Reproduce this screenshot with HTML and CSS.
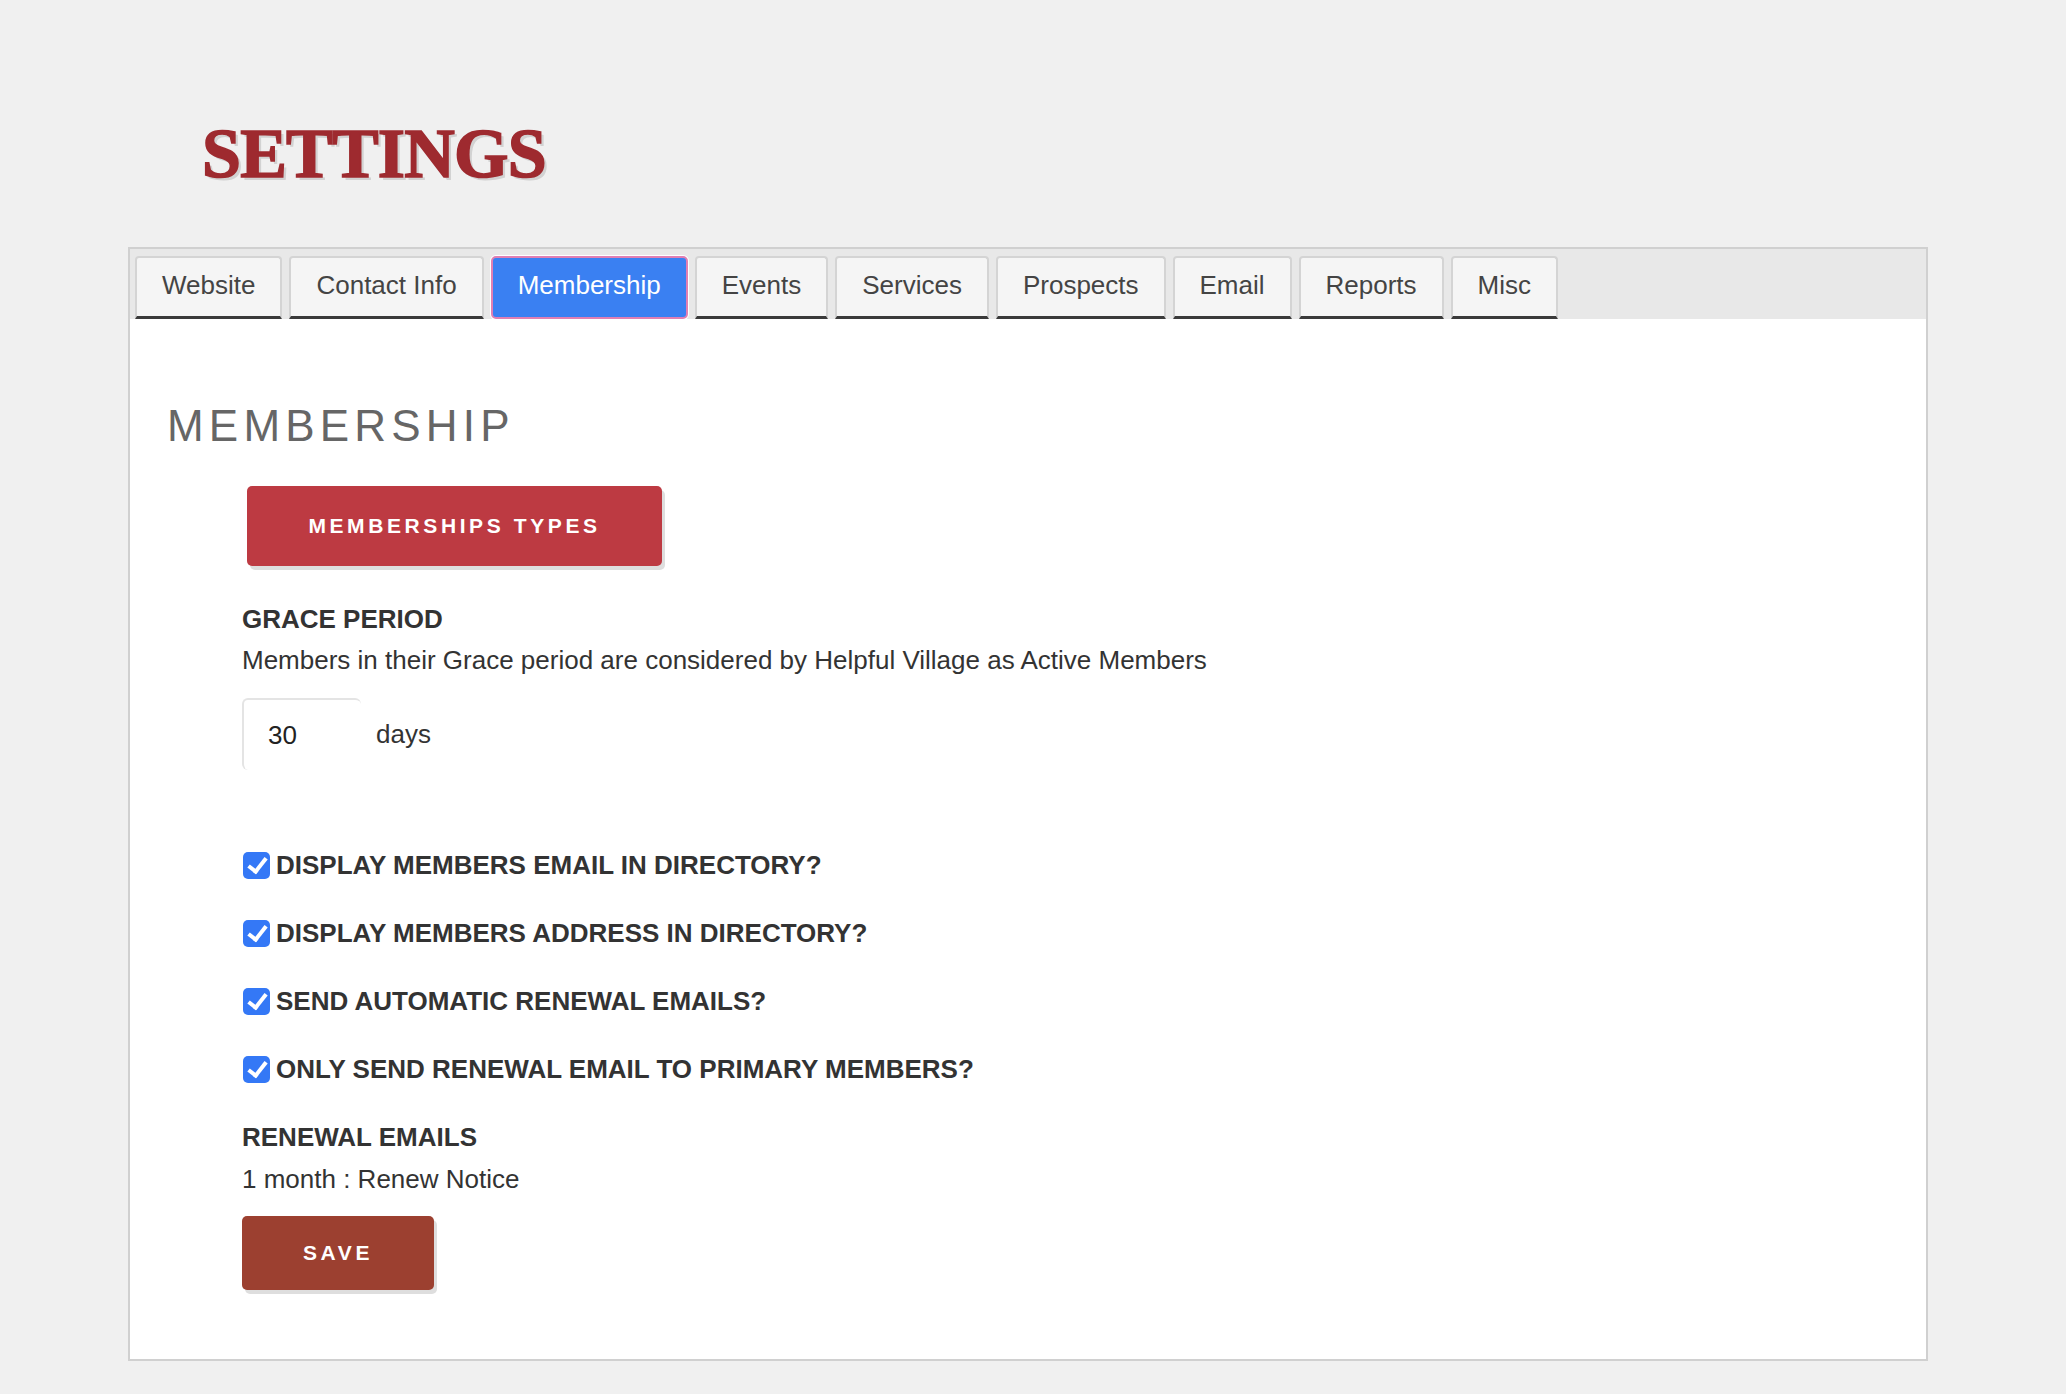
FILE: index.html
```html
<!DOCTYPE html>
<html lang="en">
<head>
<meta charset="utf-8">
<title>Settings</title>
<link rel="stylesheet" href="styles.css">
</head>
<body>
<div class="page">
  <header class="header">
    <h1 class="title">SETTINGS</h1>
  </header>
  <section class="panel">
    <nav class="tabs">
      <a class="tab">Website</a>
      <a class="tab">Contact Info</a>
      <a class="tab tab-active">Membership</a>
      <a class="tab">Events</a>
      <a class="tab">Services</a>
      <a class="tab">Prospects</a>
      <a class="tab">Email</a>
      <a class="tab">Reports</a>
      <a class="tab">Misc</a>
    </nav>
    <div class="content">
      <h2 class="section-title">MEMBERSHIP</h2>
      <div class="form">
        <button class="btn btn-types">MEMBERSHIPS TYPES</button>
        <div class="label">GRACE PERIOD</div>
        <p class="desc">Members in their Grace period are considered by Helpful Village as Active Members</p>
        <div class="grace-row">
          <input class="days-input" type="text" value="30">
          <span class="days">days</span>
        </div>
        <div class="checks">
          <label class="check-row"><input class="cb" type="checkbox" checked><span>DISPLAY MEMBERS EMAIL IN DIRECTORY?</span></label>
          <label class="check-row"><input class="cb" type="checkbox" checked><span>DISPLAY MEMBERS ADDRESS IN DIRECTORY?</span></label>
          <label class="check-row"><input class="cb" type="checkbox" checked><span>SEND AUTOMATIC RENEWAL EMAILS?</span></label>
          <label class="check-row"><input class="cb" type="checkbox" checked><span>ONLY SEND RENEWAL EMAIL TO PRIMARY MEMBERS?</span></label>
        </div>
        <div class="label label-renewal">RENEWAL EMAILS</div>
        <p class="desc desc-renewal">1 month : Renew Notice</p>
        <button class="btn btn-save">SAVE</button>
      </div>
    </div>
  </section>
</div>
</body>
</html>
```

FILE: styles.css
```css
html, body {
  margin: 0;
  padding: 0;
  background: #f0f0f0;
}

body {
  font-family: "Liberation Sans", Arial, Helvetica, sans-serif;
  color: #333;
}

.page {
  padding: 0 138px 0 128px;
}

.header {
  padding: 120px 0 59px 74px;
}

.title {
  margin: 0;
  font-family: "Liberation Serif", "Times New Roman", serif;
  font-weight: 700;
  font-size: 70px;
  line-height: 68px;
  letter-spacing: -0.8px;
  color: #9e2a2f;
  -webkit-text-stroke: 1.6px #9e2a2f;
  text-shadow: 3px 3px 0 #d2d2d2;
}

.panel {
  background: #fff;
  border: 2px solid #d0d0d0;
}

.tabs {
  display: flex;
  gap: 7px;
  padding: 7px 8px 0 5px;
  background: #e8e8e8;
}

.tab {
  display: block;
  padding: 0 25px 3px;
  font-size: 26px;
  line-height: 55px;
  color: #444;
  background: #f5f5f5;
  border: 2px solid #d4d4d4;
  border-bottom: 3px solid #3a3a3a;
  border-radius: 4px 4px 0 0;
  cursor: pointer;
}

.tab-active {
  color: #fff;
  background: #3a80f2;
  border: 2px solid #e07fb3;
  border-radius: 5px;
  padding-bottom: 4px;
  box-shadow: 0 0 0 1px #fff;
}

.content {
  padding: 85px 36px 69px 37px;
}

.section-title {
  margin: 0;
  font-size: 44px;
  line-height: 44px;
  font-weight: 400;
  letter-spacing: 5.2px;
  color: #666;
}

.form {
  padding-left: 75px;
}

.btn {
  display: block;
  border: 0;
  border-radius: 5px;
  color: #fff;
  font-family: "Liberation Sans", Arial, Helvetica, sans-serif;
  font-weight: 700;
  font-size: 21px;
  letter-spacing: 3.6px;
  cursor: pointer;
  padding: 0;
}

.btn-types {
  margin: 38px 0 0 5px;
  width: 415px;
  height: 80px;
  background: #bd3a42;
  box-shadow: 3px 4px 0 #dedede;
}

.label {
  margin-top: 38px;
  font-size: 26px;
  line-height: 30px;
  font-weight: 700;
  color: #333;
}

.desc {
  margin: 11px 0 0;
  font-size: 26px;
  line-height: 30px;
  color: #333;
}

.grace-row {
  display: flex;
  align-items: center;
  gap: 15px;
  margin-top: 23px;
}

.days-input {
  box-sizing: border-box;
  width: 119px;
  height: 72px;
  padding: 0 0 0 24px;
  border: 0;
  border-top: 2px solid #e4e4e4;
  border-left: 2px solid #e4e4e4;
  border-radius: 6px 6px 0 6px;
  font-family: "Liberation Sans", Arial, Helvetica, sans-serif;
  font-size: 26px;
  color: #222;
  background: #fff;
  outline: none;
}

.days {
  font-size: 26px;
  color: #333;
}

.checks {
  display: flex;
  flex-direction: column;
  gap: 28px;
  margin-top: 75px;
}

.check-row {
  display: flex;
  align-items: center;
  gap: 6px;
  height: 40px;
  font-size: 26px;
  font-weight: 700;
  color: #333;
  cursor: pointer;
}

.cb {
  -webkit-appearance: none;
  appearance: none;
  position: relative;
  flex: none;
  width: 27px;
  height: 27px;
  margin: 0 0 0 1px;
  border-radius: 5px;
  background: #3478f6;
  cursor: pointer;
}

.cb:checked::after {
  content: "";
  position: absolute;
  left: 9px;
  top: 2px;
  width: 7px;
  height: 15px;
  border-right: 4px solid #fff;
  border-bottom: 4px solid #fff;
  transform: rotate(38deg);
}

.label-renewal {
  margin-top: 33px;
}

.desc-renewal {
  margin-top: 12px;
}

.btn-save {
  margin-top: 22px;
  width: 192px;
  height: 74px;
  background: #9c4030;
  box-shadow: 3px 4px 0 #dedede;
}
```
